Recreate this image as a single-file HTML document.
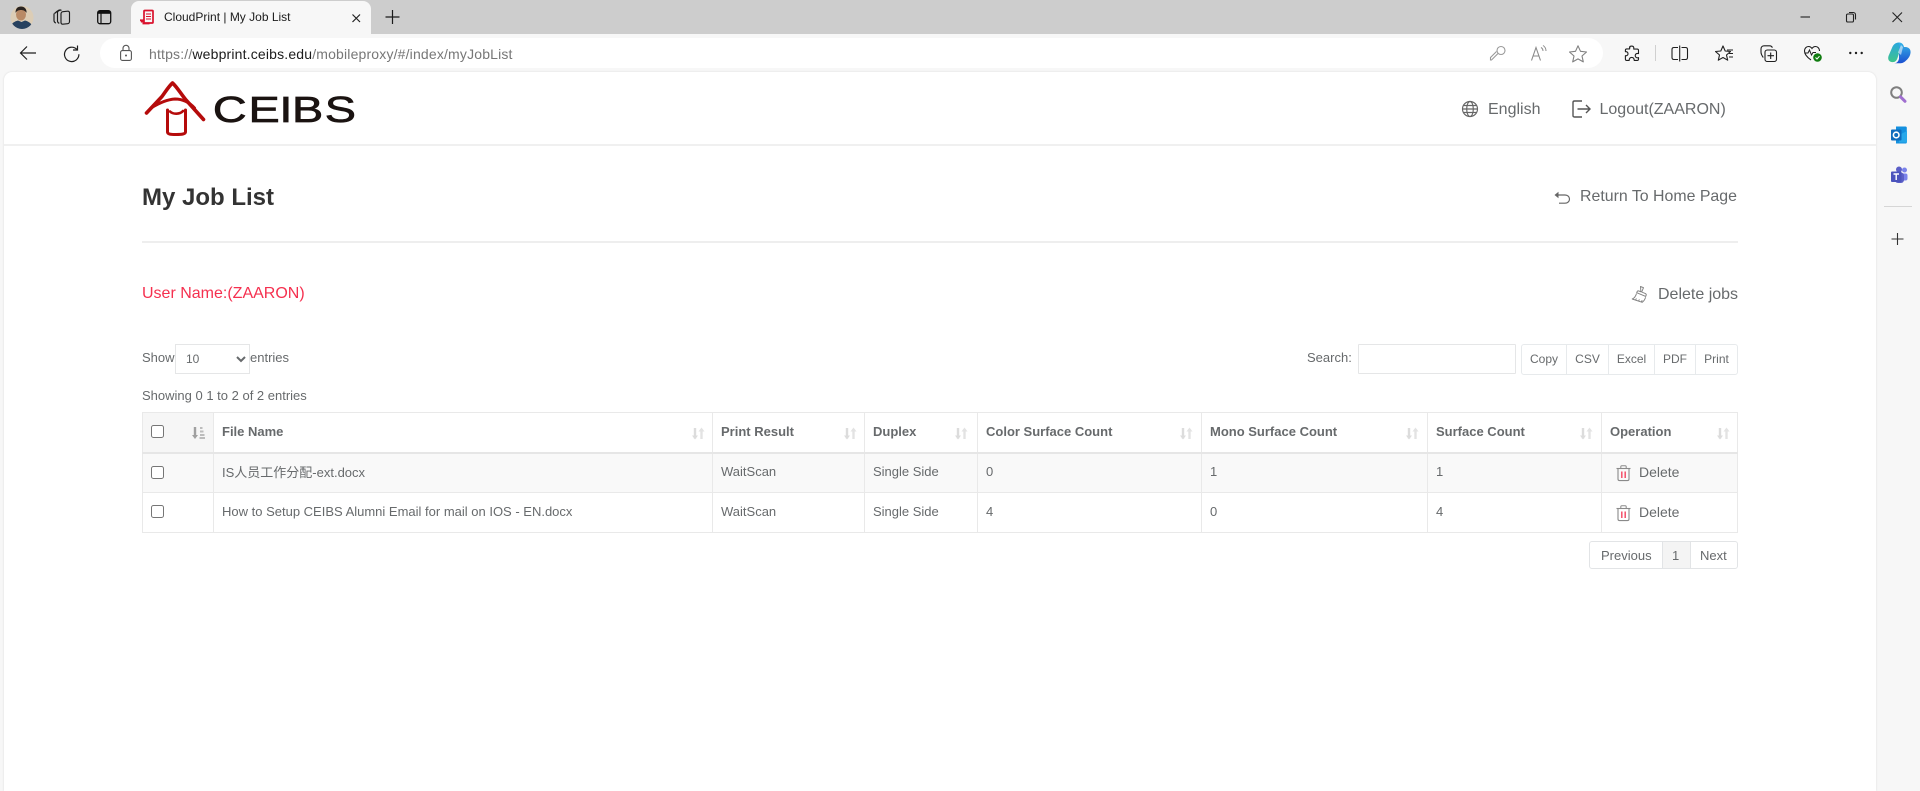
<!DOCTYPE html>
<html lang="en"><head><meta charset="utf-8"><title>CloudPrint | My Job List</title>
<style>
*{box-sizing:border-box}
html,body{margin:0;padding:0;width:1920px;height:791px;overflow:hidden;background:#f7f7f7;font-family:"Liberation Sans","Noto Sans CJK SC",sans-serif;color:#676a6c}
.a{position:absolute}
.t{position:absolute;white-space:nowrap;line-height:1}
#top{left:0;top:0;width:1920px;height:34px;background:#cdcdcd}
#tab{left:131px;top:1px;width:240px;height:33px;background:#f7f7f7;border-radius:8px 8px 0 0}
#pill{left:100px;top:38px;width:1503px;height:30px;background:#fff;border-radius:15px}
#page{left:4px;top:72px;width:1872px;height:719px;background:#fff;border-radius:8px 8px 0 0;box-shadow:0 0 2px rgba(0,0,0,.12)}
#hline{left:4px;top:144px;width:1872px;height:2px;background:#f0f0f0}
#dline{left:142px;top:241px;width:1596px;height:2px;background:#eeeeee}
select{position:absolute;left:175px;top:344px;width:75px;height:30px;background:#fff;border:1px solid #e5e6e7;color:#676a6c;font:12px "Liberation Sans",sans-serif;padding:0 0 0 6px;margin:0;border-radius:0}
#search{position:absolute;left:1358px;top:344px;width:158px;height:30px;border:1px solid #e5e6e7;background:#fff;border-radius:1px}
#btns{position:absolute;left:1521px;top:344px;width:217px;height:31px;display:flex;border:1px solid #e7eaec;border-radius:3px;background:#fff;font-size:12px;color:#676a6c}
#btns span{display:block;text-align:center;line-height:29px;border-right:1px solid #e7eaec}
#btns span:last-child{border-right:0}
table{position:absolute;left:142px;top:412px;width:1595px;border-collapse:collapse;table-layout:fixed;font-size:13px;color:#676a6c}
th,td{border:1px solid #e9e9e9;padding:0 0 2px 8px;text-align:left;overflow:hidden;white-space:nowrap}
th{height:40px;font-size:13px;font-weight:bold;padding-bottom:2px;border-bottom:2px solid #e6e6e6}
td{height:40px}
tr.o td{background:#f9f9f9}
th.s{background:#f6f6f6}
input[type=checkbox]{position:absolute;left:9px;width:13px;height:13px;margin:0}
#pg{position:absolute;left:1589px;top:541px;width:149px;height:28px;border:1px solid #e2e4e6;border-radius:3px;font-size:13px;background:#fff}
</style></head>
<body>
<div class="a" id="top"></div>
<div class="a" id="tab"></div>
<div class="a" id="pill"></div>
<div class="a" id="page"></div>
<div class="a" id="hline"></div>

<div class="t" style="left:164px;top:11px;font-size:12px;color:#1b1b1b;width:125px">CloudPrint | My Job List</div>
<div class="t" style="left:149px;top:47px;font-size:14px;color:#777;letter-spacing:.17px">https://<span style="color:#1b1b1b">webprint.ceibs.edu</span>/mobileproxy/#/index/myJobList</div>

<svg class="a" style="left:0;top:0" width="1920" height="791" viewBox="0 0 1920 791" fill="none">
<defs>
<clipPath id="av"><circle cx="22" cy="17.5" r="11.5"/></clipPath>
<linearGradient id="cp1" x1="0" y1="0" x2="0" y2="1"><stop offset="0" stop-color="#2aa7e0"/><stop offset="1" stop-color="#3ec48a"/></linearGradient>
<linearGradient id="cp2" x1="0" y1="0" x2="0" y2="1"><stop offset="0" stop-color="#35b6e8"/><stop offset="1" stop-color="#1b4fd0"/></linearGradient>
</defs>
<!-- avatar -->
<g clip-path="url(#av)"><rect x="10" y="5" width="24" height="25" fill="#dccdb6"/>
<ellipse cx="21" cy="14.5" rx="5" ry="6" fill="#b98a66"/>
<path d="M15.500 13c0-5 2.500-6.500 5.500-6.500s6 2 5.500 6.500c-1-2-3-3-5.500-3s-4.500 1-5.500 3z" fill="#2a2320"/>
<path d="M10 30c0-6 4-8.500 8-9.500l3.500 1.500 3.500-1.500c4 1 8 3.500 8 9.500z" fill="#27415f"/></g>
<!-- workspaces -->
<g stroke="#1c1c1c" stroke-width="1.150" stroke-linejoin="round">
<path d="M54.500 13.500l3-2.500M54 13.500v7c0 1.500.6 2 1.800 2.600M57.500 11.500l3-1.800"/>
<path d="M57.500 12.500c0-1.500 1-2.500 2.500-2.500l1.500.3M57.500 12.500v8.500c0 1.200.7 1.900 1.800 2.400"/>
<rect x="61" y="11.500" width="8.500" height="12.500" rx="1.800" transform="skewY(-6) translate(0 6.800)"/>
</g>
<!-- vertical tabs -->
<rect x="97.700" y="10.700" width="13" height="13" rx="2.200" stroke="#111" stroke-width="1.300"/>
<rect x="98" y="11" width="12.500" height="2.800" fill="#111"/>
<path d="M101 13.500v10" stroke="#111" stroke-width="1.200"/>
<!-- favicon -->
<g fill="none" stroke="#d9112c" stroke-width="1.700">
<rect x="144" y="10.500" width="9" height="12.500" rx=".8"/>
<path d="M140 20.200h4M142.500 23.500h7"/></g>
<path d="M146 14h5M146 16.500h5M146 19h5" stroke="#d9112c" stroke-width="1.100"/>
<path d="M140 19.500h4v3h-3z" fill="#d9112c"/>
<!-- close tab / new tab -->
<path d="M352.500 14.500l7.500 7.500M360 14.500l-7.500 7.500" stroke="#222" stroke-width="1.200"/>
<path d="M392.500 10v14M385.500 17h14" stroke="#1b1b1b" stroke-width="1.200"/>
<!-- back / reload -->
<path d="M20.500 53h15.500M27 46.500l-6.500 6.500 6.500 6.500" stroke="#1f1f1f" stroke-width="1.200"/>
<path d="M76.800 49.300a7.200 7.200 0 1 0 2.100 5" stroke="#1f1f1f" stroke-width="1.200"/>
<path d="M77.500 45.500v4.500h-4.500" stroke="#1f1f1f" stroke-width="1.200"/>
<!-- lock -->
<rect x="120.600" y="50.600" width="10.800" height="9.800" rx="1.800" stroke="#555" stroke-width="1.100"/>
<path d="M123 50.500v-2.200a3 3 0 0 1 6 0v2.200" stroke="#555" stroke-width="1.100"/>
<circle cx="126" cy="55.500" r="1" fill="#555"/>
<!-- key -->
<g stroke="#999" stroke-width="1.100"><circle cx="1501" cy="50.500" r="4"/><path d="M1498 53.500l-6.500 6.500h-1v-2.500l6-6"/></g>
<!-- read aloud -->
<path d="M1531.500 60.500l4.500-13 4.500 13M1533.200 56h5.700" stroke="#8a8a8a" stroke-width="1.100"/>
<path d="M1541 47.500c1.500.8 2 2 2 3.500M1543 45.500c2 1.200 3 3 3 5.500" stroke="#8a8a8a" stroke-width="1"/>
<!-- star -->
<path d="M1578 45.800l2.500 5.500 6 .7-4.500 4 1.300 5.900-5.300-3-5.300 3 1.300-5.900-4.500-4 6-.7z" stroke="#808080" stroke-width="1.100" stroke-linejoin="round"/>
<!-- extensions -->
<path d="M1629.500 47.300c.5-1.600 3.700-1.600 4.200 0 .2.800.2 1.200 0 1.800h3.500c.8 0 1.300.5 1.300 1.300v3.200c-1.800-.6-3.300.4-3.300 2s1.500 2.600 3.300 2v1.500c0 .8-.5 1.300-1.300 1.300h-3c0-2-1-3-2.500-3s-2.500 1-2.500 3h-2.500c-.8 0-1.300-.5-1.300-1.300v-3.400c1.500.3 2.600-.6 2.600-2s-1.100-2.300-2.600-2v-1.500c0-.8.500-1.300 1.300-1.300h3c-.2-.6-.2-1 .3-1.900z" stroke="#1f1f1f" stroke-width="1.100" stroke-linejoin="round"/>
<path d="M1655.500 45v16" stroke="#d0d0d0" stroke-width="1"/>
<!-- split -->
<path d="M1678 47.500h-4c-1.200 0-2 .8-2 2v8c0 1.200.8 2 2 2h4M1681.500 47.500h4c1.200 0 2 .8 2 2v8c0 1.200-.8 2-2 2h-4M1679.700 45.500v16" stroke="#1f1f1f" stroke-width="1.100"/>
<!-- favorites -->
<path d="M1723 46l2.200 5 5.300.5-4 3.500 1.200 5.200-4.700-2.700-4.700 2.700 1.200-5.200-4-3.500 5.300-.5z" stroke="#1f1f1f" stroke-width="1.100" stroke-linejoin="round"/>
<path d="M1727 50h6M1729 53.500h4M1729 57h4" stroke="#1f1f1f" stroke-width="1.100"/>
<!-- collections -->
<path d="M1761 52v-3c0-2 1.300-3.200 3.200-3.200h5.300c1.500 0 2.500.7 2.800 1.900M1761 52c0 2.500 1.200 4 2.300 5.500" stroke="#1f1f1f" stroke-width="1.100"/>
<rect x="1765" y="50" width="11.500" height="11.500" rx="2.300" stroke="#1f1f1f" stroke-width="1.100"/>
<path d="M1770.700 52.500v6.500M1767.500 55.700h6.500" stroke="#1f1f1f" stroke-width="1.100"/>
<!-- heart -->
<path d="M1811 60c-1-.7-6.500-4.500-6.500-9 0-2.600 1.800-4.500 4-4.500 1.500 0 2.700.8 3.500 2 .8-1.200 2-2 3.500-2 2.200 0 4 1.900 4 4.500" stroke="#1f1f1f" stroke-width="1.100"/>
<path d="M1805 53h3l1.500-3 2 5 1.500-2.500h3" stroke="#1f1f1f" stroke-width="1"/>
<circle cx="1817.500" cy="57.500" r="4.300" fill="#107c10"/>
<path d="M1815.500 57.500l1.500 1.500 2.500-2.800" stroke="#fff" stroke-width="1"/>
<!-- dots -->
<g fill="#1f1f1f"><circle cx="1850.300" cy="53" r="1.200"/><circle cx="1856" cy="53" r="1.200"/><circle cx="1861.700" cy="53" r="1.200"/></g>
<!-- copilot -->
<path d="M1899 42.500c-4 0-6 2.500-7.500 6.500l-3 7c-1 3.500.5 5.500 3 6 3.500.5 5-1 6-4l3.500-11c.7-2.500-.2-4.500-2-4.500z" fill="url(#cp1)"/>
<path d="M1899 42.500c3 0 4.500 2 5 4.500l1.500 0c3.500.2 5.500 2.500 5 6-.5 3.500-2.500 6-5.500 8.500-2 1.500-3.500 1.800-6 1.800h-5c3 .2 4.300-2 5-4.500z" fill="url(#cp2)"/>
<path d="M1898 52.500l3-7.500 2 2-2 8z" fill="#fff" opacity=".55"/>
<!-- window controls -->
<path d="M1800.500 17h9.500" stroke="#222" stroke-width="1.100"/>
<rect x="1846.500" y="14" width="7" height="8" rx="1.300" stroke="#222" stroke-width="1.100"/>
<path d="M1849 12.500h4.200c1.300 0 2.300 1 2.300 2.300v4.700" stroke="#222" stroke-width="1.100"/>
<path d="M1892.500 12.500l9.500 9.500M1902 12.500l-9.500 9.500" stroke="#222" stroke-width="1.100"/>
<!-- sidebar -->
<circle cx="1896.500" cy="92.500" r="5.300" stroke="#7f7f7f" stroke-width="2"/>
<path d="M1900.500 96.800l4.500 4.500" stroke="#a06fd0" stroke-width="3" stroke-linecap="round"/>
<path d="M1896 126.500h9.500c.8 0 1.300.5 1.300 1.300v14.400c0 .8-.5 1.300-1.300 1.300h-9.500z" fill="#1490df"/>
<path d="M1899 135l8-4v11.500h-8z" fill="#28a8ea"/>
<rect x="1891" y="129.500" width="10.500" height="11" rx="1" fill="#0f6cbd"/>
<circle cx="1896.200" cy="135" r="2.800" stroke="#fff" stroke-width="1.600"/>
<circle cx="1904.500" cy="170" r="2.500" fill="#7b83eb"/><rect x="1901" y="173.500" width="6.500" height="7" rx="2" fill="#7b83eb"/>
<circle cx="1899" cy="169.500" r="3" fill="#5b5fc7"/><rect x="1895" y="172.500" width="9" height="10.500" rx="3" fill="#5b5fc7"/>
<rect x="1891" y="171.500" width="10.500" height="10.500" rx="1" fill="#4b53bc"/>
<path d="M1893.500 174h5.500M1896.200 174v6" stroke="#fff" stroke-width="1.400"/>
<path d="M1884 206.500h28" stroke="#d6d6d6" stroke-width="1"/>
<path d="M1897.500 233v12M1891.500 239h12" stroke="#333" stroke-width="1.100"/>
<!-- logo -->
<g stroke="#b50b0b" stroke-linecap="round" stroke-linejoin="round">
<path d="M146.500 113L162 96.500C166 91 169 86 172.500 83C177 87 181 94 186 100L203.500 119.500" stroke-width="3.600"/>
<path d="M151 108C159 103 167 99.500 175 99C182 99 189 102 194.500 108" stroke-width="3"/>
<path d="M167.500 110V132C167.500 134 170 134.500 176 134.500C182 134.500 185.500 134 185.500 132V110" stroke-width="3"/>
<path d="M170 111.500C173 114.500 180 114.500 183 111" stroke-width="2.600"/>
</g>
<text y="122" transform="scale(1.3 1)" font-family="Liberation Sans" font-size="36" fill="#1a1311" stroke="#1a1311" stroke-width=".7" x="163.800 191.200 214.900 224.600 249.800">CEIBS</text>
<!-- globe -->
<g stroke="#666" stroke-width="1.150"><circle cx="1470" cy="109" r="7.500"/><ellipse cx="1470" cy="109" rx="3.300" ry="7.500"/><path d="M1462.500 109h15M1463.500 105.500h13M1463.500 112.500h13"/></g>
<!-- logout -->
<path d="M1582 101h-7.500c-1 0-1.500.5-1.500 1.500v13c0 1 .5 1.500 1.500 1.500h7.500" stroke="#555" stroke-width="1.400"/>
<path d="M1577.500 109h12M1586 105l4 4-4 4" stroke="#555" stroke-width="1.400"/>
<!-- return -->
<path d="M1558 195h7c2.800 0 4.500 1.800 4.500 4s-1.700 4.200-4.500 4.200h-6" stroke="#666" stroke-width="1.150"/>
<path d="M1558.500 191.800l-4 3.200 4 3.200z" fill="#666"/>
<!-- brush -->
<g stroke="#808080" stroke-width=".95" stroke-linejoin="round">
<path d="M1640.500 286.500l3 1.200-1.800 4.300 3.700 1.600c.8.400 1 1.100.7 1.800l-.4 1-9-3.700.4-1c.3-.8 1-1 1.800-.7l2 .8z"/>
<path d="M1636.500 293.500c-.8 3-2.300 4.700-4.300 5.500l10 3.300c1.700-1.200 2.800-3 3.400-5"/>
<path d="M1635.500 300.200l.9-1.800M1638.500 301.200l.9-1.800M1641.300 302l.9-1.800"/></g>
<!-- select chevron -->
<path d="M237 357l3.300 3.300 3.300-3.300" stroke="#444" stroke-width="1.600"/>
</svg>

<div class="t" style="left:1488px;top:102px;font-size:16px;color:#676a6c">English</div>
<div class="t" style="left:1599.500px;top:102px;font-size:16px;color:#676a6c">Logout(ZAARON)</div>
<div class="t" style="left:142px;top:186px;font-size:24px;font-weight:bold;color:#333">My Job List</div>
<div class="t" style="left:1580px;top:189px;font-size:15.900px;color:#676a6c">Return To Home Page</div>
<div class="a" id="dline"></div>
<div class="t" style="left:142px;top:286px;font-size:16px;color:#f5304f">User Name:(ZAARON)</div>
<div class="t" style="left:1658px;top:287px;font-size:16px;color:#676a6c">Delete jobs</div>

<div class="t" style="left:142px;top:351px;font-size:13px">Show</div>
<select><option>10</option></select>
<div class="t" style="left:250px;top:351px;font-size:13px">entries</div>
<div class="t" style="left:142px;top:389px;font-size:13px">Showing 0 1 to 2 of 2 entries</div>
<div class="t" style="left:1307px;top:351px;font-size:13px">Search:</div>
<div id="search"></div>
<div id="btns"><span style="width:45px">Copy</span><span style="width:42px">CSV</span><span style="width:46px">Excel</span><span style="width:41px">PDF</span><span style="flex:1">Print</span></div>

<table>
<colgroup><col style="width:71px"><col style="width:499px"><col style="width:152px"><col style="width:113px"><col style="width:224px"><col style="width:226px"><col style="width:174px"><col style="width:136px"></colgroup>
<tr>
<th class="s"></th><th>File Name</th><th>Print Result</th><th>Duplex</th><th>Color Surface Count</th><th>Mono Surface Count</th><th>Surface Count</th><th>Operation</th>
</tr>
<tr class="o"><td></td><td>IS人员工作分配-ext.docx</td><td>WaitScan</td><td>Single Side</td><td>0</td><td>1</td><td>1</td><td></td></tr>
<tr><td></td><td>How to Setup CEIBS Alumni Email for mail on IOS - EN.docx</td><td>WaitScan</td><td>Single Side</td><td>4</td><td>0</td><td>4</td><td></td></tr>
</table>

<input type="checkbox" style="left:151px;top:425px">
<input type="checkbox" style="left:151px;top:466px">
<input type="checkbox" style="left:151px;top:505px">

<div class="t" style="left:1639px;top:465px;font-size:14px">Delete</div>
<div class="t" style="left:1639px;top:505px;font-size:14px">Delete</div>

<svg class="a" style="left:0;top:0" width="1920" height="791" viewBox="0 0 1920 791" fill="none">
<defs>
<g id="sort"><path d="M3 1v10.500" stroke="#dcdcdc" stroke-width="2.400"/><path d="M0 8.500h6L3 12.500z" fill="#dcdcdc"/><path d="M9.500 12V2" stroke="#e3e3e3" stroke-width="2.400"/><path d="M6.500 4.500h6L9.500.5z" fill="#e3e3e3"/></g>
<g id="trash"><path d="M1 3.500h14" stroke="#8a8a8a" stroke-width="1.100"/><path d="M5.300 3.500V1.800c0-.6.4-1 1-1h3.400c.6 0 1 .4 1 1v1.700" stroke="#8a8a8a" stroke-width="1"/><path d="M2.500 3.500V14c0 1 .6 1.600 1.600 1.600h7.800c1 0 1.600-.6 1.600-1.600V3.500" stroke="#8a8a8a" stroke-width="1.100"/><path d="M6.300 6.500v6.500M9.700 6.500v6.500" stroke="#f4506a" stroke-width="1.500"/></g>
</defs>
<use href="#sort" x="692" y="427"/><use href="#sort" x="844" y="427"/><use href="#sort" x="955" y="427"/><use href="#sort" x="1180" y="427"/><use href="#sort" x="1406" y="427"/><use href="#sort" x="1580" y="427"/><use href="#sort" x="1717" y="427"/>
<path d="M195 427v9" stroke="#a0a0a0" stroke-width="2.400"/><path d="M192 435h6L195 439z" fill="#a0a0a0"/>
<path d="M200 428h2.500M200 431.500h3.500M200 435h4.500M199.500 438h5.500" stroke="#bcbcbc" stroke-width="1.900"/>
<use href="#trash" x="1615.500" y="465"/><use href="#trash" x="1615.500" y="505"/>
</svg>

<div id="pg"><div class="a" style="left:71.500px;top:0;width:29px;height:26px;background:#f4f4f4;border-left:1px solid #e2e4e6;border-right:1px solid #e2e4e6"></div>
<div class="t" style="left:11px;top:7px">Previous</div><div class="t" style="left:82px;top:7px">1</div><div class="t" style="left:110px;top:7px">Next</div></div>
</body></html>
